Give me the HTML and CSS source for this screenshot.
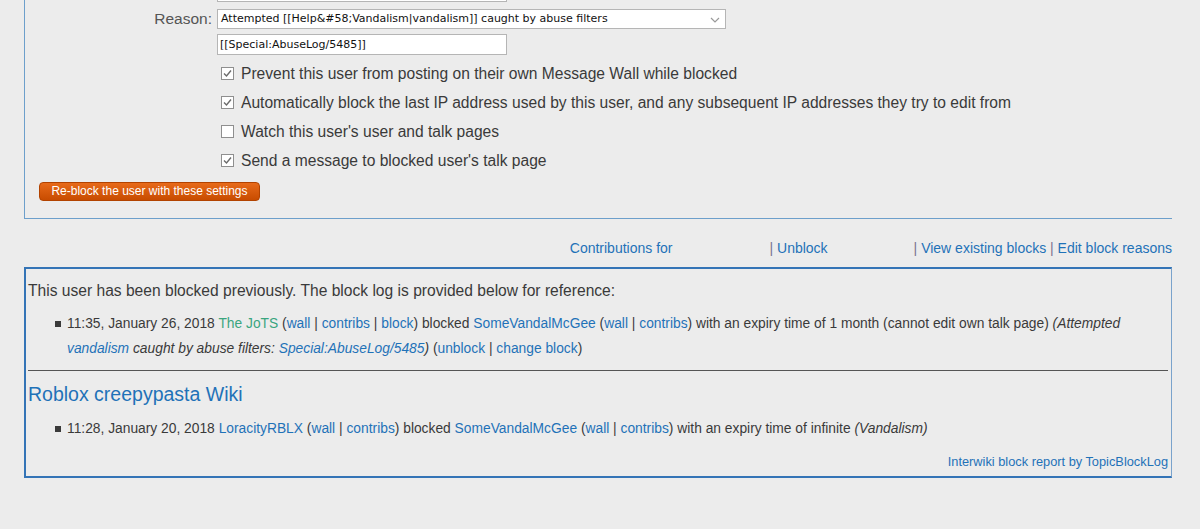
FILE: index.html
```html
<!DOCTYPE html>
<html>
<head>
<meta charset="utf-8">
<link rel="stylesheet" href="styles.css">
</head>
<body>
<div class="page">
  <div class="blockform">
    <div class="row row-prev">
      <div class="label"></div>
      <div class="field"><span class="textbox prev"></span></div>
    </div>
    <div class="row row-reason">
      <div class="label">Reason:</div>
      <div class="field">
        <span class="select">Attempted [[Help&amp;#58;Vandalism|vandalism]] caught by abuse filters
          <svg class="chev" width="10" height="6" viewBox="0 0 10 6"><path d="M1 1 L5 5 L9 1" fill="none" stroke="#9a9a9a" stroke-width="1.2"/></svg>
        </span>
      </div>
    </div>
    <div class="row row-other">
      <div class="label"></div>
      <div class="field"><span class="textbox other">[[Special:AbuseLog/5485]]</span></div>
    </div>
    <div class="row check first">
      <div class="label"></div>
      <div class="field"><span class="cb on"><svg width="11" height="11" viewBox="0 0 11 11"><path d="M2 5.5 L4.5 8 L9 2.5" fill="none" stroke="#6b6b6b" stroke-width="1.4"/></svg></span>Prevent this user from posting on their own Message Wall while blocked</div>
    </div>
    <div class="row check">
      <div class="label"></div>
      <div class="field"><span class="cb on"><svg width="11" height="11" viewBox="0 0 11 11"><path d="M2 5.5 L4.5 8 L9 2.5" fill="none" stroke="#6b6b6b" stroke-width="1.4"/></svg></span>Automatically block the last IP address used by this user, and any subsequent IP addresses they try to edit from</div>
    </div>
    <div class="row check">
      <div class="label"></div>
      <div class="field"><span class="cb"></span>Watch this user's user and talk pages</div>
    </div>
    <div class="row check">
      <div class="label"></div>
      <div class="field"><span class="cb on"><svg width="11" height="11" viewBox="0 0 11 11"><path d="M2 5.5 L4.5 8 L9 2.5" fill="none" stroke="#6b6b6b" stroke-width="1.4"/></svg></span>Send a message to blocked user's talk page</div>
    </div>
    <div class="submit-row"><span class="btn">Re-block the user with these settings</span></div>
  </div>

  <div class="toollinks"><a class="lnk">Contributions for</a><span class="gap g1"></span><span class="pipe">|</span> <a class="lnk">Unblock</a><span class="gap g2"></span><span class="pipe">|</span> <a class="lnk">View existing blocks</a> <span class="pipe">|</span> <a class="lnk">Edit block reasons</a></div>

  <div class="logbox">
    <p class="intro">This user has been blocked previously. The block log is provided below for reference:</p>
    <ul class="log">
      <li>11:35, January 26, 2018 <a class="lnk green">The JoTS</a> (<a class="lnk">wall</a> | <a class="lnk">contribs</a> | <a class="lnk">block</a>) blocked <a class="lnk">SomeVandalMcGee</a> (<a class="lnk">wall</a> | <a class="lnk">contribs</a>) with an expiry time of 1 month (cannot edit own talk page) <i>(Attempted <a class="lnk">vandalism</a> caught by abuse filters: <a class="lnk">Special:AbuseLog/5485</a>)</i> (<a class="lnk">unblock</a> | <a class="lnk">change block</a>)</li>
    </ul>
    <hr class="sep">
    <h2 class="wiki"><a class="lnk">Roblox creepypasta Wiki</a></h2>
    <ul class="log second">
      <li>11:28, January 20, 2018 <a class="lnk">LoracityRBLX</a> (<a class="lnk">wall</a> | <a class="lnk">contribs</a>) blocked <a class="lnk">SomeVandalMcGee</a> (<a class="lnk">wall</a> | <a class="lnk">contribs</a>) with an expiry time of infinite <i>(Vandalism)</i></li>
    </ul>
    <div class="credit"><a class="lnk">Interwiki block report by TopicBlockLog</a></div>
  </div>
</div>
</body>
</html>
```
FILE: styles.css
```css
html, body {
  margin: 0;
  padding: 0;
  background: #ececec;
  height: 100%;
  overflow: hidden;
}
body {
  font-family: "Liberation Sans", Arial, sans-serif;
  color: #3a3a3a;
}
.page {
  padding: 0 28px 0 24px;
}
.blockform {
  border-left: 1px solid #6d9fcb;
  border-bottom: 1px solid #6d9fcb;
  margin-top: -20px;
  padding-bottom: 18px;
}
.row {
  display: grid;
  grid-template-columns: 187px 1fr;
  column-gap: 5px;
  align-items: center;
}
.label {
  text-align: right;
  font-size: 15.5px;
  line-height: 18px;
  color: #555;
}
.field { line-height: 0; }
.textbox, .select {
  display: inline-flex;
  align-items: center;
  box-sizing: border-box;
  background: #fff;
  border: 1px solid #b5b5b5;
  font-family: "DejaVu Sans", sans-serif;
  font-size: 11px;
  line-height: 14px;
  color: #111;
  white-space: nowrap;
}
.row-prev { height: 22px; }
.textbox.prev {
  width: 290px;
  height: 22px;
}
.row-reason { margin-top: 7px; height: 20px; }
.select {
  width: 509px;
  height: 20px;
  padding: 0 0 0 3px;
  position: relative;
}
.chev {
  position: absolute;
  right: 5px;
  top: 7px;
}
.row-other { margin-top: 5px; height: 21px; }
.textbox.other {
  width: 290px;
  height: 21px;
  padding-left: 2px;
}
.row.check {
  height: 29px;
  font-size: 15.6px;
  color: #3a3a3a;
}
.row.check.first { margin-top: 4px; }
.check .field {
  display: flex;
  align-items: center;
  white-space: nowrap;
  line-height: 18px;
}
.cb {
  display: inline-flex;
  align-items: center;
  justify-content: center;
  box-sizing: border-box;
  width: 13px;
  height: 13px;
  border: 1px solid #8f8f8f;
  background: #fff;
  margin: 0 7px 0 4px;
}
.submit-row {
  margin-top: 6px;
  padding-left: 14px;
  height: 19px;
}
.btn {
  display: inline-block;
  box-sizing: border-box;
  width: 221px;
  height: 19px;
  line-height: 17px;
  text-align: center;
  font-size: 12px;
  color: #fff;
  background: linear-gradient(#e76a1a, #c84c00);
  border: 1px solid #b24300;
  border-radius: 4px;
}
.toollinks {
  text-align: right;
  white-space: pre;
  font-size: 14px;
  margin-top: 20px;
  height: 18px;
  line-height: 18px;
}
.gap { display: inline-block; }
.gap.g1 { width: 97px; }
.gap.g2 { width: 86px; }
.pipe { color: #7a7390; }
.lnk { color: #1f72b8; text-decoration: none; }
.lnk.green { color: #3aa57f; }
.logbox {
  margin-top: 10px;
  border-top: 2px solid #3474b6;
  border-left: 2px solid #3474b6;
  border-bottom: 2px solid #3474b6;
  border-right: 1px solid #7aa3cc;
  padding: 0 3px 0 2px;
  height: 211px;
  box-sizing: border-box;
}
.intro {
  margin: 13px 0 0 0;
  font-size: 15.6px;
  line-height: 18px;
}
.log {
  list-style: none;
  margin: 11px 0 0 0;
  padding: 0 0 0 39px;
  font-size: 13.8px;
  line-height: 25px;
}
.log li { position: relative; }
.log li::before {
  content: "";
  position: absolute;
  left: -12px;
  top: 10px;
  width: 6px;
  height: 6px;
  background: #3a3a3a;
}
.sep {
  border: 0;
  border-top: 1px solid #555;
  margin: 9px 0 0 0;
  height: 0;
}
.wiki {
  margin: 11px 0 0 0;
  font-size: 19.5px;
  font-weight: normal;
  line-height: 24px;
}
.log.second { margin-top: 10px; }
.credit {
  text-align: right;
  font-size: 12.8px;
  line-height: 16px;
  margin-top: 13px;
}
```
